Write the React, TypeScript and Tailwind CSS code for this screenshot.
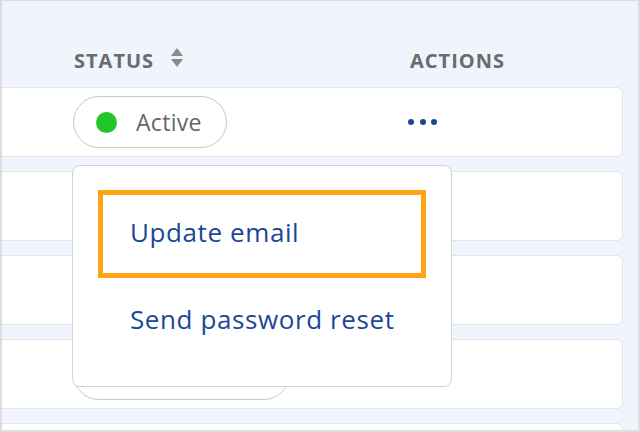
const rows = [
  { status: "Active", dot: "bg-[#22c52a]", pill: "w-[154px]", show: "full" },
  { status: "", dot: "", pill: "", show: "none" },
  { status: "", dot: "", pill: "", show: "none" },
  { status: "", dot: "", pill: "w-[217px]", show: "outline" },
  { status: "", dot: "", pill: "", show: "none" },
];

function SortIcon() {
  return (
    <svg width="12" height="20" viewBox="0 0 12 20" className="ml-[17px] -mt-[1px]">
      <path d="M6 0 L12 8 L0 8 Z" fill="#8a8a8a" />
      <path d="M0 11 L12 11 L6 19 Z" fill="#8a8a8a" />
    </svg>
  );
}

function Dots() {
  return (
    <div className="flex items-center gap-[5.5px]">
      <span className="w-[6px] h-[6px] rounded-full bg-[#1c4699]" />
      <span className="w-[6px] h-[6px] rounded-full bg-[#1c4699]" />
      <span className="w-[6px] h-[6px] rounded-full bg-[#1c4699]" />
    </div>
  );
}

export default function App() {
  return (
    <div
      className="relative w-[640px] h-[432px] overflow-hidden bg-[#eff4fd] border-l-2 border-r-2 border-b-2 border-t border-[#dedede]"
      style={{ fontFamily: "'Open Sans', Lato, sans-serif" }}
    >
      {/* Table header */}
      <div className="flex h-[86px] pt-[48px] text-[#6b6b6b] font-bold text-[20px] leading-[24px] tracking-[1px]">
        <div className="flex items-start w-[408px] pl-[72px]">
          <span>STATUS</span>
          <SortIcon />
        </div>
        <div>ACTIONS</div>
      </div>

      {/* Rows */}
      <div className="flex flex-col gap-[14px]">
        {rows.map((row, i) => (
          <div
            key={i}
            className="flex items-center h-[70px] -ml-[10px] mr-[15px] bg-white border border-[#e1e5eb] rounded-[6px]"
          >
            {row.show === "full" && (
              <>
                <div className="w-[415px] pl-[80px] flex items-center">
                  <div
                    className={`${row.pill} h-[52px] flex items-center rounded-full border border-[#c9c9c9] pl-[22px]`}
                  >
                    <span className={`w-[21px] h-[21px] rounded-full ${row.dot}`} />
                    <span className="ml-[19px] text-[23px] tracking-[0.3px] text-[#666666]">
                      {row.status}
                    </span>
                  </div>
                </div>
                <Dots />
              </>
            )}
            {row.show === "outline" && (
              <div className="pl-[80px]">
                <div className={`${row.pill} h-[52px] rounded-full border border-[#c9c9c9]`} />
              </div>
            )}
          </div>
        ))}
      </div>

      {/* Actions menu */}
      <div className="absolute left-[70px] top-[164px] w-[380px] h-[222px] bg-white border border-[#d3d3d3] rounded-[8px] pt-[24px] pb-[20px] pl-[25px] flex flex-col text-[26px] tracking-[0.6px] text-[#1b4797]">
        <div className="w-[328px] h-[88px] border-[5px] border-[#ffa515] flex items-center pl-[27px] pb-[4px]">
          Update email
        </div>
        <div className="w-[328px] h-[88px] border-[5px] border-transparent flex items-center pl-[27px] pb-[6px]">
          Send password reset
        </div>
      </div>
    </div>
  );
}
